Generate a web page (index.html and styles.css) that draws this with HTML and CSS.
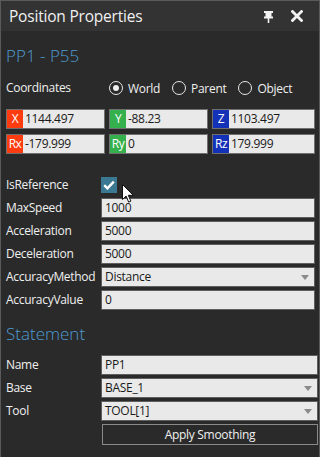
FILE: index.html
```html
<!DOCTYPE html>
<html lang="en">
<head>
  <meta charset="UTF-8">
  <meta name="viewport" content="width=device-width, initial-scale=1.0">
  <title>Position Properties</title>
  <link rel="stylesheet" href="styles.css">
</head>
<body>

<div class="window">
  <!-- Title Bar -->
  <div class="titlebar">
    <span class="title">Position Properties</span>
    <span class="title-icons">
      <svg class="icon-pin" width="11" height="13" viewBox="0 0 11 13">
        <path d="M1 1h9v2H8.5v3.5H10v2H6.3V13H4.7V8.5H1v-2h1.5V3H1z" fill="#f2f2f2"/>
      </svg>
      <svg class="icon-close" width="12" height="12" viewBox="0 0 12 12">
        <path d="M1.5 1.5l9 9M10.5 1.5l-9 9" stroke="#f2f2f2" stroke-width="2.8" stroke-linecap="square"/>
      </svg>
    </span>
  </div>

  <div class="content">
    <div class="heading">PP1 - P55</div>

    <!-- Coordinates -->
    <div class="coord-head">
      <span class="label">Coordinates</span>
      <div class="radios">
        <label class="radio checked"><span class="dot"></span>World</label>
        <label class="radio"><span class="dot"></span>Parent</label>
        <label class="radio"><span class="dot"></span>Object</label>
      </div>
    </div>

    <div class="coord-grid">
      <div class="coord"><span class="tag tag-x">X</span><span class="val">1144.497</span></div>
      <div class="coord"><span class="tag tag-y">Y</span><span class="val">-88.23</span></div>
      <div class="coord"><span class="tag tag-z">Z</span><span class="val">1103.497</span></div>
      <div class="coord"><span class="tag tag-x">Rx</span><span class="val">-179.999</span></div>
      <div class="coord"><span class="tag tag-y">Ry</span><span class="val">0</span></div>
      <div class="coord"><span class="tag tag-z">Rz</span><span class="val">179.999</span></div>
    </div>

    <!-- Motion properties -->
    <div class="form">
      <span class="label">IsReference</span>
      <div class="check-cell">
        <span class="checkbox">
          <svg width="12" height="10" viewBox="0 0 12 10">
            <path d="M1.2 5.2l3.2 3.2L10.8 1.6" stroke="#fff" stroke-width="2.4" fill="none"/>
          </svg>
        </span>
      </div>

      <span class="label">MaxSpeed</span>
      <div class="field">1000</div>

      <span class="label">Acceleration</span>
      <div class="field">5000</div>

      <span class="label">Deceleration</span>
      <div class="field">5000</div>

      <span class="label">AccuracyMethod</span>
      <div class="field select">Distance</div>

      <span class="label">AccuracyValue</span>
      <div class="field">0</div>
    </div>

    <div class="heading heading-statement">Statement</div>

    <div class="form form-statement">
      <span class="label">Name</span>
      <div class="field">PP1</div>

      <span class="label">Base</span>
      <div class="field select">BASE_1</div>

      <span class="label">Tool</span>
      <div class="field select">TOOL[1]</div>

      <span></span>
      <button class="btn-smooth">Apply Smoothing</button>
    </div>
  </div>

  <!-- mouse pointer over the checkbox -->
  <svg class="cursor" width="12" height="19" viewBox="0 0 12 19">
    <path d="M0.5 0.5v15l3.6-3.4 2.6 6 2.2-1-2.6-5.8h5z" fill="#fff" stroke="#111" stroke-width="1"/>
  </svg>
</div>

</body>
</html>
```

FILE: styles.css
```css
body {
  margin: 0;
  padding: 0;
  background-color: #2a2a2a;
  font-family: "Open Sans", "Noto Sans", sans-serif;
}

.window {
  position: relative;
  width: 318px;
  height: 470px;
  border: 1px solid #5a5a5a;
  background-color: #2a2a2a;
  overflow: hidden;
}

.titlebar {
  height: 30px;
  background-color: #333333;
  display: flex;
  align-items: center;
  justify-content: space-between;
  padding: 0 16px 0 8px;
}

.title {
  color: #f0f0f0;
  font-size: 15.5px;
  letter-spacing: -0.2px;
}

.title-icons {
  display: flex;
  align-items: center;
  gap: 17px;
}

.content {
  padding: 0 4px 0 5px;
}

.heading {
  color: #4f9bd0;
  font-size: 17px;
  font-weight: 300;
  height: 24px;
  line-height: 24px;
  margin-top: 13px;
}

.heading-statement {
  margin-top: 12px;
}

.label {
  color: #f0f0f0;
  font-size: 12px;
  letter-spacing: -0.3px;
  line-height: 20px;
  white-space: nowrap;
}

.coord-head {
  display: flex;
  align-items: center;
  margin-top: 10px;
  height: 20px;
}

.coord-head .label {
  width: 103px;
}

.radios {
  display: flex;
  gap: 12px;
}

.radio {
  display: flex;
  align-items: center;
  gap: 5px;
  color: #f0f0f0;
  font-size: 12px;
  letter-spacing: -0.3px;
}

.dot {
  width: 12px;
  height: 12px;
  border: 1.5px solid #e8e8e8;
  border-radius: 50%;
  position: relative;
}

.radio.checked .dot::after {
  content: "";
  position: absolute;
  left: 3px;
  top: 3px;
  width: 6px;
  height: 6px;
  border-radius: 50%;
  background-color: #f0f0f0;
}

.coord-grid {
  display: grid;
  grid-template-columns: 99px 99px 1fr;
  column-gap: 4px;
  row-gap: 5px;
  margin-top: 11px;
}

.coord {
  display: flex;
  height: 18px;
  background-color: #e9e9e9;
  border: 1px solid #707070;
  font-size: 12px;
  line-height: 18px;
}

.tag {
  width: 16px;
  text-align: center;
  color: #fff;
  letter-spacing: -0.5px;
  flex-shrink: 0;
}

.tag-x {
  background-color: #ff3c0f;
}

.tag-y {
  background-color: #34b04c;
}

.tag-z {
  background-color: #1432b8;
}

.val {
  color: #1a1a1a;
  padding-left: 2px;
  letter-spacing: -0.3px;
}

.form {
  display: grid;
  grid-template-columns: 95px 1fr;
  row-gap: 3px;
  margin-top: 21px;
}

.form-statement {
  margin-top: 9px;
  margin-right: -3px;
}

.check-cell {
  height: 16px;
  display: flex;
  align-items: center;
  margin-top: 2px;
}

.checkbox {
  width: 16px;
  height: 16px;
  background-color: #3b7891;
  display: flex;
  align-items: center;
  justify-content: center;
}

.field {
  position: relative;
  height: 18px;
  line-height: 18px;
  background-color: #e9e9e9;
  border: 1px solid #5e5e5e;
  color: #1a1a1a;
  font-size: 12px;
  letter-spacing: -0.3px;
  padding-left: 3px;
}

.select::after {
  content: "";
  position: absolute;
  right: 5px;
  top: 7px;
  border-left: 4px solid transparent;
  border-right: 4px solid transparent;
  border-top: 5px solid #8a8a8a;
}

.btn-smooth {
  height: 21px;
  margin-left: 1px;
  background-color: transparent;
  border: 1px solid #8a8a8a;
  color: #f0f0f0;
  font-family: "Open Sans", "Noto Sans", sans-serif;
  font-size: 12px;
  letter-spacing: -0.3px;
  padding: 0;
  cursor: pointer;
}

.cursor {
  position: absolute;
  left: 121px;
  top: 183px;
}
```
